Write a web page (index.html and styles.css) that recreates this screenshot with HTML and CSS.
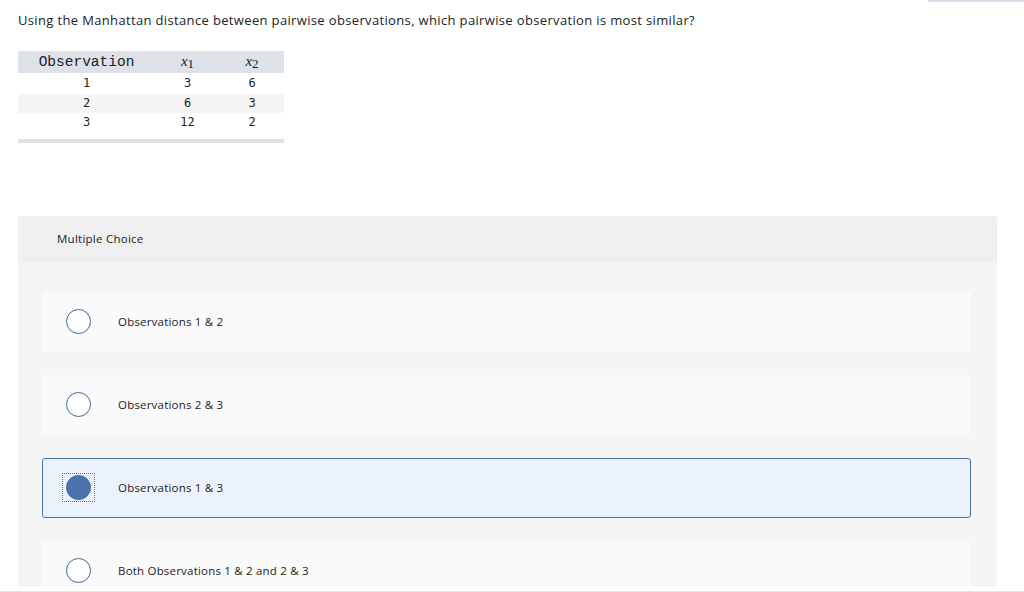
FILE: index.html
```html
<!DOCTYPE html>
<html>
<head>
<meta charset="utf-8">
<link rel="stylesheet" href="styles.css">
</head>
<body>
<div class="topbar"><span></span></div>
<main class="page">
  <p class="question">Using the Manhattan distance between pairwise observations, which pairwise observation is most similar?</p>
  <div class="table-wrap">
    <table class="data">
      <thead>
        <tr><th class="obs">Observation</th><th class="var"><i>x</i><sub>1</sub></th><th class="var"><i>x</i><sub>2</sub></th></tr>
      </thead>
      <tbody>
        <tr><td>1</td><td>3</td><td>6</td></tr>
        <tr class="alt"><td>2</td><td>6</td><td>3</td></tr>
        <tr><td>3</td><td>12</td><td>2</td></tr>
      </tbody>
    </table>
    <div class="table-foot"></div>
  </div>
  <section class="panel">
    <div class="panel-head">Multiple Choice</div>
    <div class="options">
      <div class="option"><span class="radio"></span><span class="label">Observations 1 &amp; 2</span></div>
      <div class="option"><span class="radio"></span><span class="label">Observations 2 &amp; 3</span></div>
      <div class="option selected"><span class="focus"><span class="radio"></span></span><span class="label">Observations 1 &amp; 3</span></div>
      <div class="option"><span class="radio"></span><span class="label">Both Observations 1 &amp; 2 and 2 &amp; 3</span></div>
    </div>
  </section>
</main>
<div class="bottomline"></div>
</body>
</html>
```

FILE: styles.css
```css
html, body {
  margin: 0;
  padding: 0;
  background: #ffffff;
  height: 592px;
  overflow: hidden;
}
body {
  font-family: "Open Sans", "Liberation Sans", sans-serif;
  color: #222;
}
.topbar {
  height: 2px;
  display: flex;
  justify-content: flex-end;
}
.topbar span {
  width: 96px;
  background: #d6e0ec;
}
.page {
  padding: 0 27px 0 18px;
  height: 585px;
  overflow: hidden;
  box-sizing: border-box;
}
.question {
  margin: 10px 0 0 0;
  font-size: 13px;
  line-height: 16px;
  letter-spacing: 0.35px;
  color: #222;
}
.table-wrap {
  width: 266px;
  margin-top: 23px;
}
.data {
  border-collapse: collapse;
  width: 266px;
}
.data th, .data td {
  text-align: center;
  padding: 0;
}
.data thead tr {
  background: #dde1e8;
  height: 22px;
}
.data th.obs {
  width: 137px;
  font-family: "Liberation Mono", monospace;
  font-weight: normal;
  font-size: 14.5px;
  color: #222;
}
.data th.var {
  font-family: "Liberation Serif", serif;
  font-weight: normal;
  font-size: 15px;
  color: #222;
}
.data th.var:nth-child(2) { width: 65px; }
.data th.var i { font-style: italic; }
.data th.var sub {
  font-size: 13px;
  vertical-align: -2px;
  font-style: normal;
}
.data td {
  font-family: "DejaVu Sans Mono", monospace;
  font-size: 12px;
  color: #222;
  height: 19.5px;
  line-height: 19px;
}
.data tbody tr:first-child td { padding-top: 1px; }
.data tr.alt { background: #f5f5f5; }
.table-foot {
  height: 4px;
  background: #dde1e8;
  margin-top: 6px;
}
.panel {
  margin-top: 73px;
  width: 979px;
  background: #f5f5f5;
  border-radius: 3px 3px 0 0;
}
.panel-head {
  height: 46px;
  background: #efefef;
  display: flex;
  align-items: center;
  padding-left: 39px;
  font-size: 11.5px;
  letter-spacing: 0.25px;
  color: #222;
  border-radius: 3px 3px 0 0;
}
.options {
  padding: 30px 26px 30px 24px;
  display: flex;
  flex-direction: column;
  gap: 23px;
}
.option {
  height: 60px;
  background: #fafafa;
  border-radius: 3px;
  display: flex;
  align-items: center;
  box-sizing: border-box;
  padding-left: 23px;
  border: 1px solid transparent;
}
.option.selected {
  background: #ebf2fb;
  border-color: #4a72aa;
}
.radio {
  width: 23px;
  height: 23px;
  border-radius: 50%;
  border: 1.5px solid #3e689e;
  background: #fff;
  flex: none;
}
.option > .radio { margin: 0 27px 0 0; }
.focus {
  width: 33px;
  height: 29px;
  box-sizing: border-box;
  border: 1.5px dotted #4a78c0;
  display: flex;
  align-items: center;
  justify-content: center;
  margin: 0 23px 0 -4px;
  flex: none;
}
.focus .radio {
  background: #4a74b0;
  border-color: #3e689e;
  width: 23px;
  height: 23px;
}
.label {
  font-size: 11.5px;
  letter-spacing: 0.2px;
  color: #222;
}
.bottomline {
  height: 1px;
  margin-top: 4px;
  background: #e6e6e6;
}
```
